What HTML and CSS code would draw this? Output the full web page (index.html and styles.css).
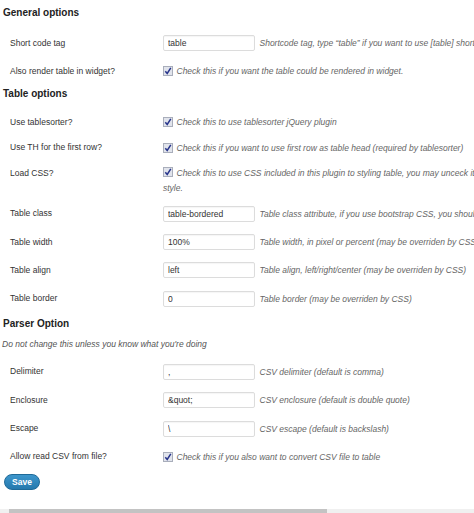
FILE: index.html
```html
<!DOCTYPE html>
<html>
<head>
<meta charset="utf-8">
<link rel="stylesheet" href="styles.css">
</head>
<body>
<div class="page">
  <h3 class="section-title">General options</h3>
  <div class="row row-input">
    <div class="label">Short code tag</div>
    <div class="field"><input class="text" type="text" value="table"><span class="desc">Shortcode tag, type “table” if you want to use [table] shortcode tag.</span></div>
  </div>
  <div class="row row-input">
    <div class="label">Also render table in widget?</div>
    <div class="field"><span class="check"><svg viewBox="0 0 10 10" width="10" height="10"><rect x="0.5" y="0.5" width="9" height="9" fill="#e1e4ec" stroke="#a9aebb"/><path d="M2.3 5.2 L4.2 7.4 L7.8 1.8" fill="none" stroke="#27348b" stroke-width="1.5"/></svg></span><span class="desc">Check this if you want the table could be rendered in widget.</span></div>
  </div>

  <h3 class="section-title mid">Table options</h3>
  <div class="row row-check">
    <div class="label">Use tablesorter?</div>
    <div class="field"><span class="check"><svg viewBox="0 0 10 10" width="10" height="10"><rect x="0.5" y="0.5" width="9" height="9" fill="#e1e4ec" stroke="#a9aebb"/><path d="M2.3 5.2 L4.2 7.4 L7.8 1.8" fill="none" stroke="#27348b" stroke-width="1.5"/></svg></span><span class="desc">Check this to use tablesorter jQuery plugin</span></div>
  </div>
  <div class="row row-check">
    <div class="label">Use TH for the first row?</div>
    <div class="field"><span class="check"><svg viewBox="0 0 10 10" width="10" height="10"><rect x="0.5" y="0.5" width="9" height="9" fill="#e1e4ec" stroke="#a9aebb"/><path d="M2.3 5.2 L4.2 7.4 L7.8 1.8" fill="none" stroke="#27348b" stroke-width="1.5"/></svg></span><span class="desc">Check this if you want to use first row as table head (required by tablesorter)</span></div>
  </div>
  <div class="row row-multi">
    <div class="label">Load CSS?</div>
    <div class="field field-multi"><span class="check"><svg viewBox="0 0 10 10" width="10" height="10"><rect x="0.5" y="0.5" width="9" height="9" fill="#e1e4ec" stroke="#a9aebb"/><path d="M2.3 5.2 L4.2 7.4 L7.8 1.8" fill="none" stroke="#27348b" stroke-width="1.5"/></svg></span><span class="desc">Check this to use CSS included in this plugin to styling table, you may unceck it if you want to use your own<br>style.</span></div>
  </div>
  <div class="row row-input">
    <div class="label">Table class</div>
    <div class="field"><input class="text" type="text" value="table-bordered"><span class="desc">Table class attribute, if you use bootstrap CSS, you should add table-bordered</span></div>
  </div>
  <div class="row row-input">
    <div class="label">Table width</div>
    <div class="field"><input class="text" type="text" value="100%"><span class="desc">Table width, in pixel or percent (may be overriden by CSS)</span></div>
  </div>
  <div class="row row-input">
    <div class="label">Table align</div>
    <div class="field"><input class="text" type="text" value="left"><span class="desc">Table align, left/right/center (may be overriden by CSS)</span></div>
  </div>
  <div class="row row-input">
    <div class="label">Table border</div>
    <div class="field"><input class="text" type="text" value="0"><span class="desc">Table border (may be overriden by CSS)</span></div>
  </div>

  <h3 class="section-title last">Parser Option</h3>
  <p class="intro">Do not change this unless you know what you're doing</p>
  <div class="row row-input">
    <div class="label">Delimiter</div>
    <div class="field"><input class="text" type="text" value=","><span class="desc">CSV delimiter (default is comma)</span></div>
  </div>
  <div class="row row-input">
    <div class="label">Enclosure</div>
    <div class="field"><input class="text" type="text" value="&amp;quot;"><span class="desc">CSV enclosure (default is double quote)</span></div>
  </div>
  <div class="row row-input">
    <div class="label">Escape</div>
    <div class="field"><input class="text" type="text" value="\"><span class="desc">CSV escape (default is backslash)</span></div>
  </div>
  <div class="row row-input">
    <div class="label">Allow read CSV from file?</div>
    <div class="field"><span class="check"><svg viewBox="0 0 10 10" width="10" height="10"><rect x="0.5" y="0.5" width="9" height="9" fill="#e1e4ec" stroke="#a9aebb"/><path d="M2.3 5.2 L4.2 7.4 L7.8 1.8" fill="none" stroke="#27348b" stroke-width="1.5"/></svg></span><span class="desc">Check this if you also want to convert CSV file to table</span></div>
  </div>

  <button class="save" type="button">Save</button>

  <div class="hscroll"><div class="thumb"></div></div>
</div>
</body>
</html>
```

FILE: styles.css
```css
html, body {
  margin: 0;
  padding: 0;
  background: #ffffff;
}

.page {
  width: 474px;
  height: 513px;
  overflow: hidden;
  padding-top: 6px;
  box-sizing: border-box;
  font-family: "Liberation Sans", Arial, sans-serif;
  font-size: 8.5px;
  color: #333333;
}

.section-title {
  margin: 0 0 9px;
  padding-left: 3px;
  font-size: 10px;
  line-height: 14px;
  font-weight: bold;
  color: #222222;
}

.section-title.mid {
  margin-top: 1px;
}

.section-title.last {
  margin-top: 4px;
  margin-bottom: 6px;
}

.intro {
  margin: 0 0 7px;
  padding-left: 2px;
  line-height: 14px;
  font-style: italic;
  color: #555555;
}

.row {
  display: flex;
  align-items: center;
}

.row-input {
  height: 28.3px;
}

.row-check {
  height: 25.5px;
}

.row-multi {
  align-items: flex-start;
  padding: 5px 0 4px;
}

.label {
  flex: none;
  width: 153px;
  padding-left: 10px;
  line-height: 15px;
  color: #333333;
}

.field {
  flex: none;
  display: flex;
  align-items: center;
  white-space: nowrap;
}

.field-multi {
  display: block;
  line-height: 15px;
}

.field-multi .check {
  display: inline-block;
  vertical-align: -1px;
}

.text {
  box-sizing: border-box;
  width: 92px;
  height: 16px;
  margin: 0 4.5px 0 0;
  padding: 0 4px;
  border: 1px solid #dcdcdc;
  border-radius: 2px;
  background: #ffffff;
  font-family: "Liberation Sans", Arial, sans-serif;
  font-size: 8.5px;
  color: #333333;
  box-shadow: inset 0 1px 1px rgba(0, 0, 0, 0.04);
}

.check {
  display: block;
  width: 10px;
  height: 10px;
  margin-right: 3.5px;
}

.check svg {
  display: block;
}

.desc {
  font-style: italic;
  color: #666666;
}

.save {
  display: block;
  margin: 3px 0 0 4px;
  width: 36px;
  height: 16px;
  padding: 0;
  border: 1px solid #1f6a98;
  border-radius: 8px;
  background: linear-gradient(#3d96cc, #2579ad);
  color: #ffffff;
  font-family: "Liberation Sans", Arial, sans-serif;
  font-size: 8.5px;
  font-weight: bold;
  line-height: 14px;
}

.hscroll {
  margin-top: 19.3px;
  height: 4px;
  background: #f0f0f0;
}

.thumb {
  margin-left: 9px;
  width: 318px;
  height: 4px;
  background: #c3c3c3;
}
```
